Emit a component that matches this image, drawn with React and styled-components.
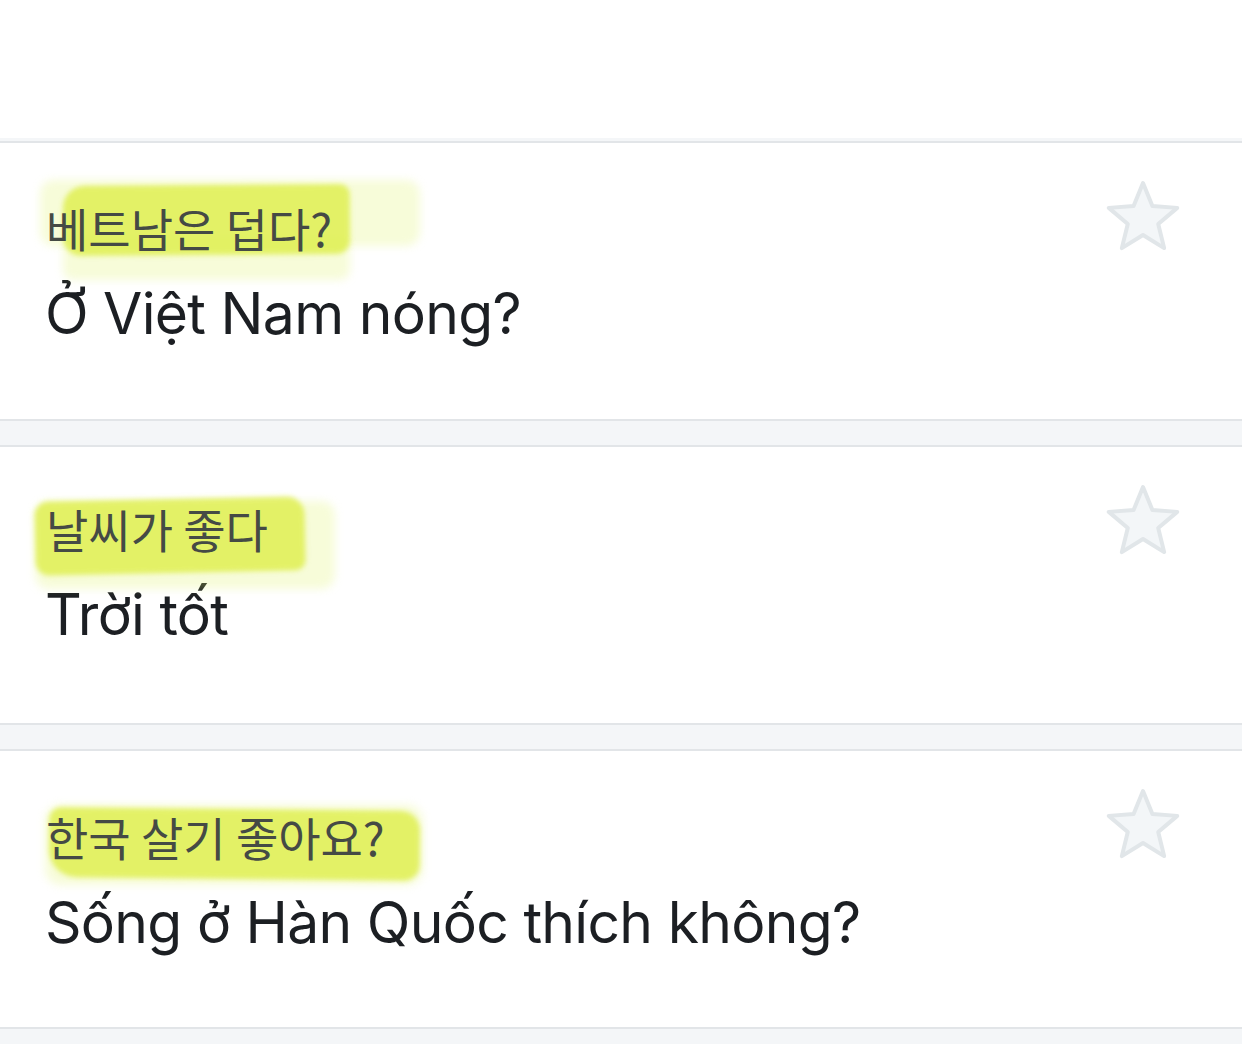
import React from "react";
import styled, { createGlobalStyle } from "styled-components";

const Global = createGlobalStyle`
  html, body { margin: 0; padding: 0; background: #f4f6f8; }
  body { font-family: Inter, "Noto Sans", sans-serif; -webkit-font-smoothing: antialiased; }
  #root { min-height: 1044px; }
`;

const Page = styled.div`
  display: flex;
  flex-direction: column;
  min-height: 1044px;
`;

const Header = styled.div`
  height: 138px;
  background: #ffffff;
`;

const List = styled.div`
  display: flex;
  flex-direction: column;
  gap: 24px;
  padding-top: 3px;
`;

const Card = styled.div`
  position: relative;
  box-sizing: border-box;
  height: 280px;
  background: #ffffff;
  border-top: 2px solid #e2e5e8;
  border-bottom: 2px solid #e2e5e8;
  display: flex;
  justify-content: space-between;
  align-items: flex-start;
  padding: 0 59px 0 46px;
`;

const TextCol = styled.div`
  display: flex;
  flex-direction: column;
  padding-top: ${(p) => p.$top || 57}px;
`;

const KoreanWrap = styled.div`
  position: relative;
  align-self: flex-start;
  margin-bottom: 27px;
`;

const Korean = styled.span`
  position: relative;
  z-index: 1;
  display: block;
  font-family: "Noto Sans CJK KR", sans-serif;
  font-size: 46px;
  line-height: 54px;
  color: #454a45;
  white-space: nowrap;
`;

const Stroke = styled.span`
  position: absolute;
  z-index: 0;
  left: ${(p) => p.$x}px;
  top: ${(p) => p.$y}px;
  width: ${(p) => p.$w}px;
  height: ${(p) => p.$h}px;
  border-radius: ${(p) => p.$r || "10px 14px 12px 8px"};
  background: ${(p) => (p.$faint ? "rgba(226, 242, 110, 0.26)" : "rgba(220, 238, 62, 0.74)")};
  filter: blur(${(p) => (p.$faint ? 4 : 2.5)}px);
  transform: rotate(${(p) => p.$rot || 0}deg);
`;

const Viet = styled.div`
  font-family: Inter, "Noto Sans", sans-serif;
  font-size: 57px;
  line-height: 66px;
  color: #1c1f23;
  letter-spacing: -0.7px;
  white-space: nowrap;
  margin-left: -1px;
`;

const StarBox = styled.div`
  padding-top: 34px;
  display: flex;
`;

function Star() {
  const cx = 40, cy = 42, R = 36, r = 16;
  const pts = [];
  for (let i = 0; i < 10; i++) {
    const rad = i % 2 === 0 ? R : r;
    const a = (Math.PI / 5) * i - Math.PI / 2;
    pts.push(`${(cx + rad * Math.cos(a)).toFixed(2)},${(cy + rad * Math.sin(a)).toFixed(2)}`);
  }
  return (
    <svg width="80" height="80" viewBox="0 0 80 80">
      <polygon
        points={pts.join(" ")}
        fill="#f3f6f8"
        stroke="#e1e6e9"
        strokeWidth="4"
        strokeLinejoin="round"
      />
    </svg>
  );
}

const items = [
  {
    ko: "베트남은 덥다?",
    vi: "Ở Việt Nam nóng?",
    top: 57,
    strokes: [
      { x: -6, y: -20, w: 380, h: 66, faint: true, r: "14px" },
      { x: 17, y: 40, w: 287, h: 40, faint: true, r: "10px" },
      { x: 17, y: -15, w: 287, h: 70, r: "22px 10px 14px 18px", rot: -0.4 },
    ],
  },
  {
    ko: "날씨가 좋다",
    vi: "Trời tốt",
    top: 54,
    strokes: [
      { x: -11, y: 0, w: 300, h: 88, faint: true, r: "14px" },
      { x: -11, y: -2, w: 270, h: 74, r: "14px 18px 10px 14px", rot: -1.2 },
    ],
  },
  {
    ko: "한국 살기 좋아요?",
    vi: "Sống ở Hàn Quốc thích không?",
    top: 58,
    strokes: [
      { x: -1, y: -4, w: 378, h: 80, faint: true, r: "16px" },
      { x: 3, y: 0, w: 371, h: 70, r: "12px 20px 16px 28px", rot: 0.6 },
    ],
  },
];

export default function App() {
  return (
    <Page>
      <Global />
      <Header />
      <List>
        {items.map((it, i) => (
          <Card key={i}>
            <TextCol $top={it.top}>
              <KoreanWrap>
                {it.strokes.map((s, j) => (
                  <Stroke
                    key={j}
                    $x={s.x}
                    $y={s.y}
                    $w={s.w}
                    $h={s.h}
                    $r={s.r}
                    $rot={s.rot}
                    $faint={s.faint}
                  />
                ))}
                <Korean>{it.ko}</Korean>
              </KoreanWrap>
              <Viet>{it.vi}</Viet>
            </TextCol>
            <StarBox>
              <Star />
            </StarBox>
          </Card>
        ))}
      </List>
    </Page>
  );
}
